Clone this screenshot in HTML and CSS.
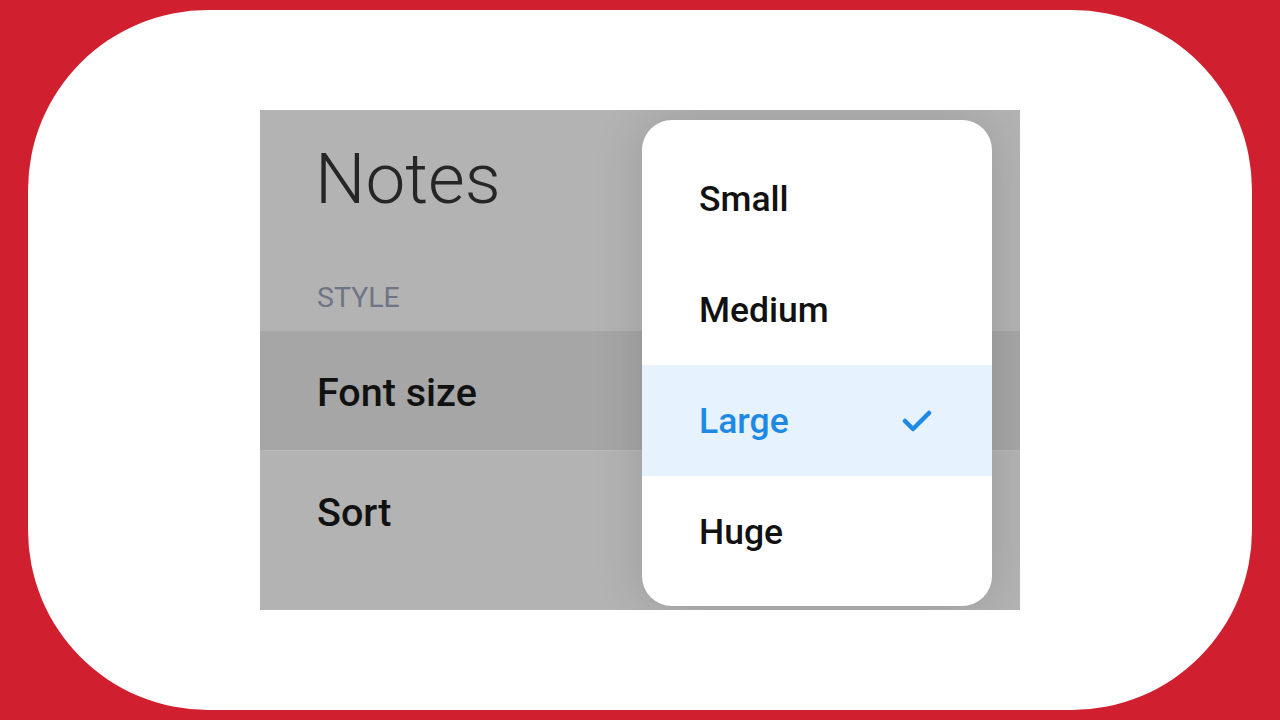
FILE: index.html
```html
<!DOCTYPE html>
<html lang="en">
<head>
    <meta charset="UTF-8">
    <meta name="viewport" content="width=device-width, initial-scale=1.0">
    <title>Notes - Font size</title>
    <link rel="stylesheet" href="styles.css">
</head>
<body>
    <div class="frame">
        <div class="panel">
            <h1 class="title">Notes</h1>
            <div class="section-label">STYLE</div>
            <div class="row row-active">Font size</div>
            <div class="row">Sort</div>

            <div class="menu">
                <div class="menu-item">Small</div>
                <div class="menu-item">Medium</div>
                <div class="menu-item selected">
                    <span>Large</span>
                    <svg class="check" width="30" height="22" viewBox="0 0 30 22">
                        <path d="M3 11 L11 19 L27 3" fill="none" stroke="#1e88e5" stroke-width="4.5" stroke-linecap="round" stroke-linejoin="round"/>
                    </svg>
                </div>
                <div class="menu-item">Huge</div>
            </div>
        </div>
    </div>
</body>
</html>
```

FILE: styles.css
```css
html, body {
    margin: 0;
    height: 100%;
}

body {
    background-color: #d01f2e;
    font-family: Roboto, "Liberation Sans", sans-serif;
    padding: 10px 28px;
    box-sizing: border-box;
}

.frame {
    height: 700px;
    background: white;
    border-radius: 180px;
    display: flex;
    justify-content: center;
    padding-top: 100px;
    box-sizing: border-box;
}

.panel {
    position: relative;
    width: 760px;
    height: 500px;
    background-color: #b3b3b3;
    overflow: hidden;
}

.title {
    margin: 0;
    padding: 33px 0 0 55px;
    font-size: 71px;
    line-height: 1;
    font-weight: 300;
    color: #262626;
}

.section-label {
    margin-top: 70px;
    padding-left: 57px;
    font-size: 28.5px;
    line-height: 1;
    color: #6f7584;
}

.row {
    height: 120px;
    display: flex;
    align-items: center;
    padding: 4px 0 0 57px;
    box-sizing: border-box;
    font-size: 39.5px;
    font-weight: 500;
    color: #111;
}

.row-active {
    margin-top: 18px;
    background-color: #a6a6a6;
    border-bottom: 1px solid #b9b9b9;
}

.menu {
    position: absolute;
    top: 10px;
    left: 382px;
    width: 350px;
    height: 486px;
    background: white;
    border-radius: 30px;
    padding: 23px 0 19px;
    box-sizing: border-box;
    box-shadow: 0 0 50px rgba(0, 0, 0, 0.14);
    overflow: hidden;
}

.menu-item {
    height: 111px;
    display: flex;
    align-items: center;
    justify-content: space-between;
    padding: 0 60px 0 57px;
    font-size: 35.5px;
    font-weight: 500;
    color: #111;
}

.menu-item.selected {
    background-color: #e6f2fd;
    color: #1e88e5;
}
```
